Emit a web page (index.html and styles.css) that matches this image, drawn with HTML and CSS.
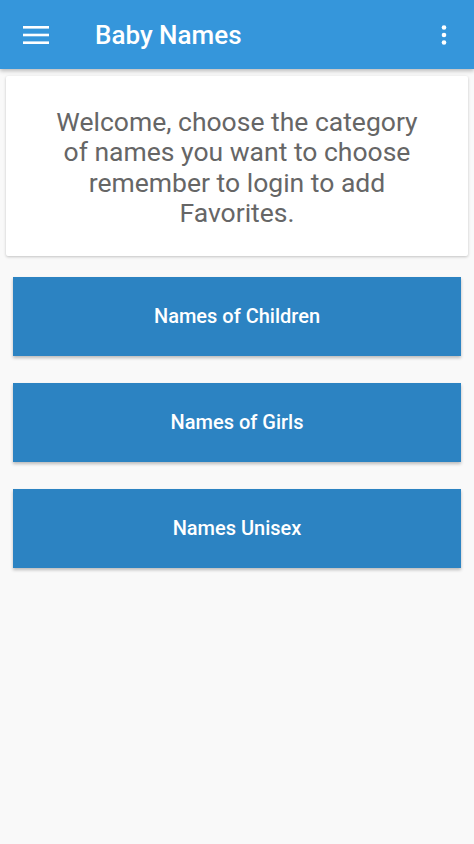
FILE: index.html
```html
<!DOCTYPE html>
<html lang="en">
<head>
    <meta charset="UTF-8">
    <meta name="viewport" content="width=device-width, initial-scale=1.0">
    <title>Baby Names</title>
    <link rel="stylesheet" href="styles.css">
</head>
<body>
    <header class="app-bar">
        <button class="icon-button" aria-label="Menu">
            <svg width="26" height="18" viewBox="0 0 26 18">
                <rect x="0" y="0" width="26" height="2.6" fill="#fff"/>
                <rect x="0" y="7.7" width="26" height="2.6" fill="#fff"/>
                <rect x="0" y="15.4" width="26" height="2.6" fill="#fff"/>
            </svg>
        </button>
        <h1 class="app-title">Baby Names</h1>
        <button class="icon-button more" aria-label="More options">
            <svg width="6" height="20" viewBox="0 0 6 20">
                <circle cx="3" cy="2.5" r="2.3" fill="#fff"/>
                <circle cx="3" cy="10" r="2.3" fill="#fff"/>
                <circle cx="3" cy="17.5" r="2.3" fill="#fff"/>
            </svg>
        </button>
    </header>

    <main class="content">
        <section class="welcome-card">
            <p>Welcome, choose the category of names you want to choose remember to login to add Favorites.</p>
        </section>

        <div class="category-list">
            <a href="#" class="category-button">Names of Children</a>
            <a href="#" class="category-button">Names of Girls</a>
            <a href="#" class="category-button">Names Unisex</a>
        </div>
    </main>
</body>
</html>
```

FILE: styles.css
```css
:root {
    --primary: #3596db;
    --primary-dark: #2c83c2;
    --bg-color: #f9f9f9;
    --text-gray: #666666;
}

body {
    margin: 0;
    padding: 0;
    font-family: Roboto, "Noto Sans", sans-serif;
    background-color: var(--bg-color);
    min-height: 100vh;
}

.app-bar {
    height: 69px;
    background-color: var(--primary);
    display: flex;
    align-items: center;
    padding: 0 22px 0 23px;
    box-shadow: 0 2px 4px rgba(0, 0, 0, 0.25);
    position: relative;
    z-index: 2;
}

.icon-button {
    background: none;
    border: none;
    padding: 0;
    display: flex;
    align-items: center;
    cursor: pointer;
}

.app-title {
    margin: 0 0 0 46px;
    flex: 1;
    color: #ffffff;
    font-size: 26px;
    font-weight: 500;
}

.more {
    margin-right: 5px;
}

.content {
    padding: 7px 6px 0 6px;
}

.welcome-card {
    background: #ffffff;
    border-radius: 2px;
    box-shadow: 0 1px 3px rgba(0, 0, 0, 0.22);
    padding: 31px 45px 27px;
    text-align: center;
}

.welcome-card p {
    margin: 0;
    color: var(--text-gray);
    font-size: 26.5px;
    line-height: 30.4px;
}

.category-list {
    display: flex;
    flex-direction: column;
    gap: 27px;
    padding: 21px 7px 0;
}

.category-button {
    display: flex;
    align-items: center;
    justify-content: center;
    height: 79px;
    background-color: var(--primary-dark);
    color: #ffffff;
    text-decoration: none;
    font-size: 20px;
    font-weight: 500;
    box-shadow: 0 2px 3px rgba(0, 0, 0, 0.25);
}
```
